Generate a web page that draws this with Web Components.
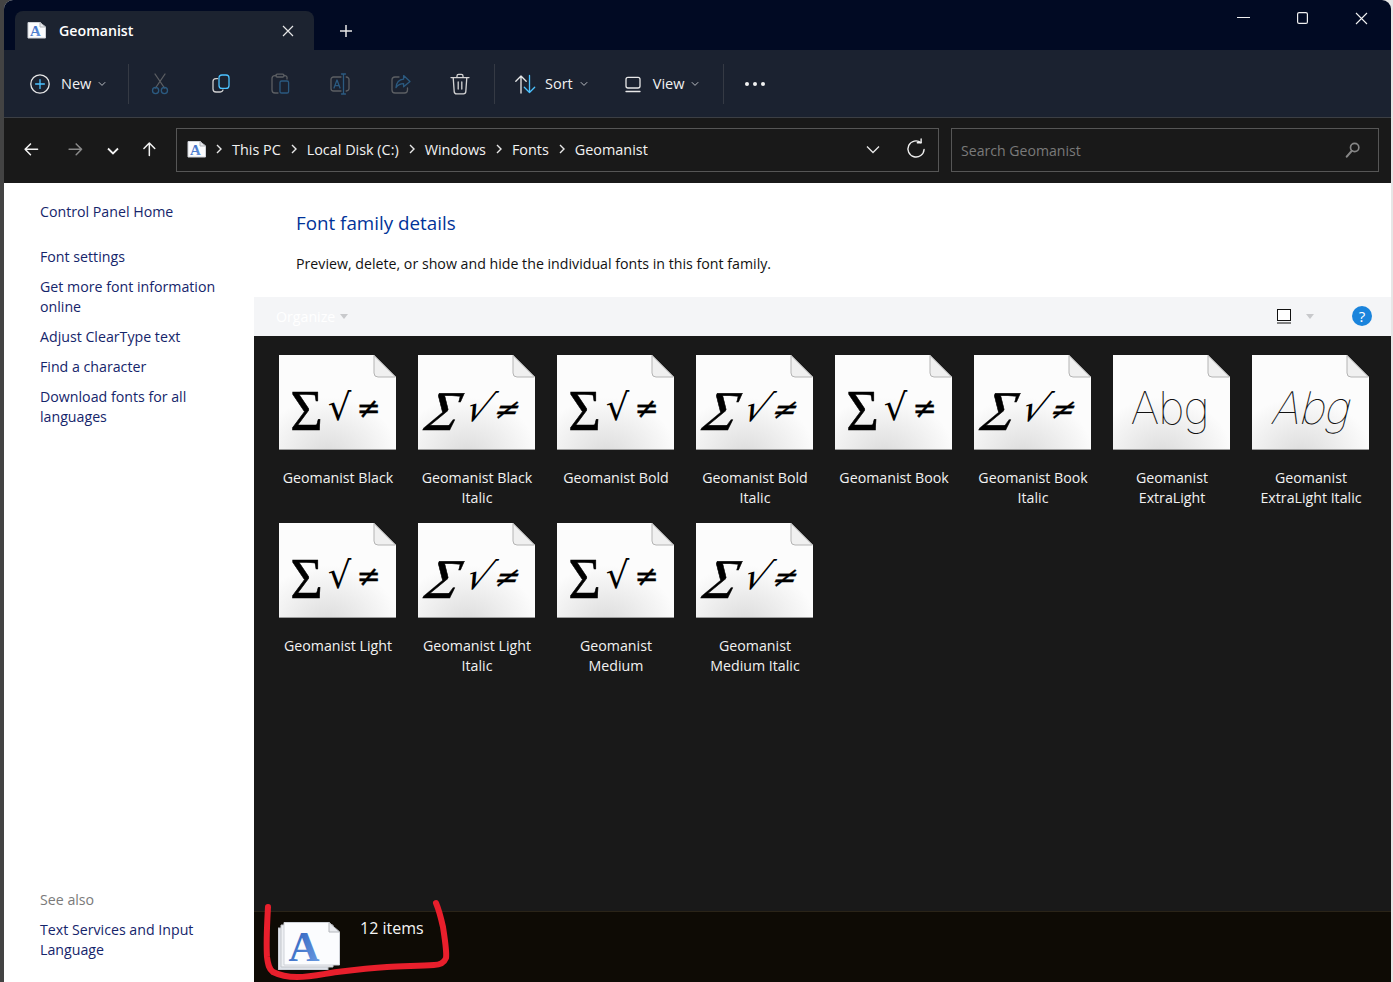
<!DOCTYPE html>
<html>
<head>
<meta charset="utf-8">
<title>Geomanist</title>
<style>
  html, body { margin: 0; height: 100%; }
  body {
    background: linear-gradient(to right, #434343 50%, #e6e6e6 50%);
    overflow: hidden;
    font-family: "Open Sans", "Noto Sans", "Liberation Sans", sans-serif;
  }
</style>
</head>
<body>
<explorer-window>
  <title-bar slot="top" label="Geomanist"></title-bar>
  <command-bar slot="top"></command-bar>
  <nav-bar slot="top"></nav-bar>
  <task-sidebar></task-sidebar>
  <font-panel>
    <font-tile>Geomanist Black</font-tile>
    <font-tile italic>Geomanist Black Italic</font-tile>
    <font-tile>Geomanist Bold</font-tile>
    <font-tile italic>Geomanist Bold Italic</font-tile>
    <font-tile>Geomanist Book</font-tile>
    <font-tile italic>Geomanist Book Italic</font-tile>
    <font-tile kind="abg">Geomanist ExtraLight</font-tile>
    <font-tile kind="abg" italic>Geomanist ExtraLight Italic</font-tile>
    <font-tile>Geomanist Light</font-tile>
    <font-tile italic>Geomanist Light Italic</font-tile>
    <font-tile>Geomanist Medium</font-tile>
    <font-tile italic>Geomanist Medium Italic</font-tile>
  </font-panel>
</explorer-window>

<script>
const BLUE = '#4cc2ff';
const DIM_BLUE = '#2b5a80';
const DIM = '#5c5f63';

const svg = (size, body) =>
  `<svg width="${size}" height="${size}" viewBox="0 0 24 24" fill="none" stroke-linecap="round" stroke-linejoin="round" stroke-width="1.3">${body}</svg>`;

const CHEVRON = `<svg width="8" height="6" viewBox="0 0 8 6" fill="none" stroke="#b9bcc2" stroke-width="1"><path d="M.8 1.2 4 4.4l3.2-3.2"/></svg>`;

const ICONS = {
  add: svg(24, `<circle cx="12" cy="12" r="9.2" stroke="#e6e6e6"/><path d="M12 7.6v8.8M7.6 12h8.8" stroke="${BLUE}"/>`),
  cut: svg(24, `<path d="M7 2l9.5 14M17 2 7.5 16" stroke="${DIM}"/><circle cx="7.6" cy="18.6" r="3.1" stroke="${DIM_BLUE}"/><circle cx="16.4" cy="18.6" r="3.1" stroke="${DIM_BLUE}"/>`),
  copy: svg(24, `<rect x="11" y="3" width="10" height="13.4" rx="3" stroke="${BLUE}"/><path d="M9.6 6.6H8a3 3 0 0 0-3 3V17a3 3 0 0 0 3 3h4a3 3 0 0 0 3-2" stroke="#d0d0d0"/>`),
  paste: svg(24, `<path d="M8 3.6H7a3 3 0 0 0-3 3V18a3 3 0 0 0 3 3h3M16 3.6h1a2.6 2.6 0 0 1 2 1.4V7" stroke="${DIM}"/><rect x="8" y="2.2" width="8" height="2.8" rx="1.2" stroke="${DIM}"/><rect x="12" y="9" width="8.6" height="12" rx="1.6" stroke="${DIM_BLUE}"/>`),
  rename: svg(24, `<path d="M13 5H5.5A2.5 2.5 0 0 0 3 7.5v9A2.5 2.5 0 0 0 5.5 19H13M18.2 5a2.6 2.6 0 0 1 2.8 2.5v9a2.6 2.6 0 0 1-2.8 2.5" stroke="${DIM}"/><path d="M15.5 2v20M13.5 2h4M13.5 22h4" stroke="${DIM_BLUE}"/><path d="M6 16l3-8 3 8M7 13.6h4" stroke="${DIM_BLUE}"/>`),
  share: svg(24, `<path d="M11 5H7a3 3 0 0 0-3 3v10a3 3 0 0 0 3 3h9.5a3 3 0 0 0 3-3v-2" stroke="${DIM}"/><path d="M15.6 3.6 22 9.4l-6.4 5.4v-3.2c-3.4 0-5.6 1-7.6 4 .4-4.800 3-8 7.600-8.400z" stroke="${DIM_BLUE}"/>`),
  trash: svg(24, `<path d="M3 5.600h18M9 5.500V4a1.600 1.600 0 0 1 1.600-1.600h2.800A1.600 1.600 0 0 1 15 4v1.500M5.200 5.600l1 14a2.400 2.400 0 0 0 2.400 2.200h6.800a2.400 2.400 0 0 0 2.400-2.200l1-14" stroke="#d4d4d4"/><path d="M10.200 10v7M13.800 10v7" stroke="#d4d4d4"/>`),
  sort: svg(24, `<path d="M8 21V4M2.800 9.200 8 4l5.200 5.200" stroke="#e8e8e8"/><path d="M16.500 3.500v17M11.300 15.300l5.200 5.200 5.200-5.200" stroke="${BLUE}"/>`),
  view: svg(24, `<rect x="5" y="5.400" width="14" height="10.600" rx="2" stroke="#e8e8e8"/><path d="M5 19.500h14" stroke="#e8e8e8"/>`),
  more: `<svg width="22" height="6" viewBox="0 0 22 6" fill="#f2f2f2"><circle cx="3" cy="3" r="2"/><circle cx="11" cy="3" r="2"/><circle cx="19" cy="3" r="2"/></svg>`,
  back: svg(20, `<path d="M17.500 10h-15M9 3.500 2.500 10 9 16.500" stroke="#f2f2f2" stroke-width="1.800"/>`),
  forward: svg(20, `<path d="M2.500 10h15M11 3.500l6.500 6.500-6.500 6.500" stroke="#8a8a8a" stroke-width="1.800"/>`),
  down: `<svg width="12" height="8" viewBox="0 0 12 8" fill="none" stroke="#f2f2f2" stroke-width="1.800"><path d="M1 1.500 6 6.500l5-5"/></svg>`,
  up: svg(20, `<path d="M10 17.500v-15M3.500 9 10 2.500 16.500 9" stroke="#f2f2f2" stroke-width="1.800"/>`),
  crumb: `<svg width="6" height="10" viewBox="0 0 6 10" fill="none" stroke="#e8e8e8" stroke-width="1.400"><path d="M1 1l4 4-4 4"/></svg>`,
  addrDown: `<svg width="14" height="9" viewBox="0 0 14 9" fill="none" stroke="#e8e8e8" stroke-width="1.300"><path d="M1 1.500l6 6 6-6"/></svg>`,
  refresh: svg(22, `<path d="M20.800 12.500a8.800 8.800 0 1 1-3.400-7.500" stroke="#f0f0f0" stroke-width="1.500"/><path d="M17.600 1v4.200h-4.200" stroke="#f0f0f0" stroke-width="1.500"/>`),
  find: svg(20, `<circle cx="14" cy="9" r="5" stroke="#868686" stroke-width="2"/><path d="M10.500 13 4.500 20" stroke="#868686" stroke-width="2.600"/>`),
};

const docIcon = (w, h, fold, fs, back) => `
  <svg width="${w}" height="${h}" viewBox="0 0 ${w} ${h}" style="display:block">
    <defs>
      <linearGradient id="ink" x1="0" y1="0" x2="1" y2="1">
        <stop offset="0" stop-color="#2458b8"/>
        <stop offset="1" stop-color="#6f9fe4"/>
      </linearGradient>
    </defs>
    ${back ? `<path d="M0 6h${w - 12}v${h - 6}H0z" fill="#dfe3ea" stroke="#b9bdc4"/><path d="M3 3h${w - 10}v${h - 6}H3z" fill="#eef0f4" stroke="#c4c7cc"/>` : ''}
    <path d="M${back ? 6 : 1} 0.500H${w - fold - 1}L${w - 0.5} ${fold}V${h - (back ? 5 : 1)}H${back ? 6 : 1}z" fill="#fbfcfe" stroke="#cfd2d8"/>
    <path d="M${w - fold - 1} 0.500L${w - 0.5} ${fold}H${w - fold - 1}z" fill="#e9ebef" stroke="#b3b6bb"/>
    <text x="${back ? 26 : w / 2 - 1}" y="${back ? h - 9 : h - 3.5}" text-anchor="middle" font-family="'Liberation Serif', serif" font-weight="700" font-size="${fs}" fill="url(#ink)">A</text>
  </svg>`;

class ExplorerWindow extends HTMLElement {
  constructor() {
    super();
    this.attachShadow({ mode: 'open' }).innerHTML = `
      <style>
        :host {
          display: flex;
          flex-direction: column;
          position: relative;
          margin: 0 2px 0 4px;
          height: 982px;
          border-radius: 9px 9px 0 0;
          overflow: hidden;
          background: #fff;
          color: #000;
        }
        .body { flex: 1; display: flex; min-height: 0; }
        .ink { position: absolute; left: -4px; top: 0; pointer-events: none; }
      </style>
      <slot name="top"></slot>
      <div class="body"><slot></slot></div>
      <svg class="ink" width="1393" height="982" viewBox="0 0 1393 982" fill="none">
        <path d="M268 907c-1 18-2 34-1 50 1 8 2 12 6 15 6 3 14 5 24 5 14 0 26-3 40-5 16-2 32-4 50-5 17-1 32-1 47-2 6 0 10-2 12-7 1-6-1-18-3-31-2-9-4-17-7-24"
          stroke="#e81f2c" stroke-width="6" stroke-linecap="round" stroke-linejoin="round"/>
      </svg>
    `;
  }
}

class TitleBar extends HTMLElement {
  constructor() {
    super();
    this.attachShadow({ mode: 'open' });
  }

  connectedCallback() {
    this.shadowRoot.innerHTML = `
      <style>
        :host {
          display: flex;
          height: 50px;
          padding-left: 11px;
          box-sizing: border-box;
          background: #010a23;
          color: #fff;
          align-items: flex-end;
        }
        .tab {
          position: relative;
          width: 299px;
          height: 39px;
          box-sizing: border-box;
          padding: 0 14px 0 12px;
          display: flex;
          align-items: center;
          background: #1c2330;
          border-radius: 8px 8px 0 0;
          font-size: 14.200px;
          font-weight: 600;
        }
        .fav { width: 19px; margin-right: 13px; }
        .name { flex: 1; }
        .close { width: 12px; height: 12px; margin-right: 6px; }
        .plus { width: 14px; height: 14px; margin: 0 0 12px 25px; }
        .controls { margin-left: auto; display: flex; align-self: flex-start; }
        .controls div { width: 59px; height: 36px; display: flex; align-items: center; justify-content: center; }
        svg { display: block; }
      </style>
      <div class="tab">
        <div class="fav">${docIcon(19, 17, 5, 15)}</div>
        <div class="name">${this.getAttribute('label')}</div>
        <svg class="close" viewBox="0 0 12 12" stroke="#e6e6e6" stroke-width="1.200"><path d="M1 1l10 10M11 1 1 11"/></svg>
      </div>
      <svg class="plus" viewBox="0 0 14 14" stroke="#e6e6e6" stroke-width="1.500"><path d="M7 1v12M1 7h12"/></svg>
      <div class="controls">
        <div><svg width="13" height="2" stroke="#f0f0f0"><path d="M0 .5h13"/></svg></div>
        <div><svg width="11" height="12" fill="none" stroke="#f0f0f0" stroke-width="1.200"><rect x=".6" y=".6" width="9.800" height="10.800" rx="1.500"/></svg></div>
        <div><svg width="13" height="13" stroke="#f0f0f0" stroke-width="1.100"><path d="M1 1l11 11M12 1 1 12"/></svg></div>
      </div>
    `;
  }
}

class CommandBar extends HTMLElement {
  constructor() {
    super();
    const tool = (name) => `<span class="tool">${ICONS[name]}</span>`;
    this.attachShadow({ mode: 'open' }).innerHTML = `
      <style>
        :host {
          display: flex;
          align-items: center;
          height: 68px;
          box-sizing: border-box;
          border-bottom: 1px solid #3c3f44;
          padding: 0 0 0 24px;
          background: #1b2230;
          color: #f2f2f2;
          font-size: 14.500px;
        }
        .btn { display: flex; align-items: center; }
        .btn span.label { margin: 0 7px 0 8px; }
        .sep { width: 1px; height: 40px; background: #353a44; }
        .tool { width: 60px; display: flex; justify-content: center; }
        svg { display: block; }
      </style>
      <div class="btn" style="width:100px">${ICONS.add}<span class="label" style="margin-left:9px">New</span>${CHEVRON}</div>
      <div class="sep"></div>
      <div class="btn" style="margin-left:1px">${tool('cut')}${tool('copy')}${tool('paste')}${tool('rename')}${tool('share')}${tool('trash')}</div>
      <div class="sep" style="margin-left:4px"></div>
      <div class="btn" style="margin-left:18px">${ICONS.sort}<span class="label">Sort</span>${CHEVRON}</div>
      <div class="btn" style="margin-left:33px">${ICONS.view}<span class="label">View</span>${CHEVRON}</div>
      <div class="sep" style="margin-left:24px"></div>
      <div class="btn" style="margin-left:20px">${ICONS.more}</div>
    `;
  }
}

class NavBar extends HTMLElement {
  constructor() {
    super();
    const crumbs = ['This PC', 'Local Disk (C:)', 'Windows', 'Fonts', 'Geomanist']
      .map((c) => `<span class="sep">${ICONS.crumb}</span><span>${c}</span>`).join('');
    this.attachShadow({ mode: 'open' }).innerHTML = `
      <style>
        :host {
          display: flex;
          align-items: flex-start;
          height: 65px;
          box-sizing: border-box;
          padding: 10px 12px 0 19px;
          background: #191919;
          color: #f2f2f2;
          font-size: 14.400px;
        }
        .arrows { display: flex; align-items: center; height: 44px; box-sizing: border-box; padding-top: 2px; }
        .box {
          height: 44px;
          box-sizing: border-box;
          border: 1px solid #565656;
          display: flex;
          align-items: center;
        }
        .addr { width: 763px; margin-left: 15px; padding: 0 11px 2px 10px; }
        .sep { width: 26px; display: flex; justify-content: center; }
        .addr .sep:first-of-type { width: 25px; margin-left: -1px; }
        .doc { width: 19px; }
        .end { margin-left: auto; display: flex; align-items: center; gap: 25px; }
        .search { width: 428px; margin-left: 12px; padding: 0 15px 0 9px; color: #7a7a7a; justify-content: space-between; font-size: 14.100px; }
        svg { display: block; }
      </style>
      <div class="arrows">
        ${ICONS.back}
        <span style="margin-left:24px">${ICONS.forward}</span>
        <span style="margin-left:20px">${ICONS.down}</span>
        <span style="margin-left:22px">${ICONS.up}</span>
      </div>
      <div class="box addr">
        <span class="doc">${docIcon(19, 17, 5, 15)}</span>
        ${crumbs}
        <span class="end">${ICONS.addrDown}${ICONS.refresh}</span>
      </div>
      <div class="box search"><span>Search Geomanist</span>${ICONS.find}</div>
    `;
  }
}

class TaskSidebar extends HTMLElement {
  constructor() {
    super();
    this.attachShadow({ mode: 'open' }).innerHTML = `
      <style>
        :host {
          display: flex;
          flex-direction: column;
          justify-content: space-between;
          width: 250px;
          flex: none;
          box-sizing: border-box;
          padding: 19px 24px 22px 36px;
          background: #fff;
          color: #15256b;
          font-size: 14.200px;
          line-height: 20px;
        }
        ul { list-style: none; margin: 0; padding: 0; display: flex; flex-direction: column; gap: 10px; }
        .home { margin-bottom: 15px; }
        .muted { color: #7a7a7a; }
      </style>
      <ul>
        <li class="home">Control Panel Home</li>
        <li>Font settings</li>
        <li>Get more font information online</li>
        <li>Adjust ClearType text</li>
        <li>Find a character</li>
        <li>Download fonts for all languages</li>
      </ul>
      <ul>
        <li class="muted">See also</li>
        <li>Text Services and Input Language</li>
      </ul>
    `;
  }
}

class FontPanel extends HTMLElement {
  constructor() {
    super();
    this.attachShadow({ mode: 'open' }).innerHTML = `
      <style>
        :host {
          flex: 1;
          min-width: 0;
          display: flex;
          flex-direction: column;
          font-size: 14.200px;
        }
        header { height: 114px; box-sizing: border-box; padding: 26px 0 0 42px; flex: none; }
        h1 { margin: 0; font-size: 18.800px; line-height: 28px; font-weight: 400; color: #003399; }
        p { margin: 17px 0 0; line-height: 20px; color: #111; }
        .bar {
          height: 39px;
          flex: none;
          box-sizing: border-box;
          display: flex;
          align-items: center;
          padding: 0 19px 0 22px;
          background: #f4f5f7;
          color: #fff;
        }
        .caret { width: 0; height: 0; border: 4.500px solid transparent; border-top: 5px solid #c8c9cc; border-bottom: 0; margin-left: 5px; }
        .grid {
          flex: 1;
          display: flex;
          flex-wrap: wrap;
          align-content: flex-start;
          padding: 19px 0 0 15px;
          background: #191919;
        }
        .details {
          height: 71px;
          flex: none;
          box-sizing: border-box;
          display: flex;
          border-top: 1px solid #2a2418;
          padding: 10px 0 0 24px;
          background: #0e0b05;
          color: #f5f5f5;
          font-size: 16px;
        }
        .count { margin: -6px 0 0 20px; line-height: 24px; }
        svg { display: block; }
      </style>
      <header>
        <h1>Font family details</h1>
        <p>Preview, delete, or show and hide the individual fonts in this font family.</p>
      </header>
      <div class="bar">
        <span>Organize</span><span class="caret"></span>
        <svg style="margin:-2px 0 0 auto" width="16" height="16" viewBox="0 0 16 16" fill="none" stroke="#111"><rect x="1.500" y="1.500" width="13" height="11" fill="#fff"/><path d="M1 15h14"/></svg>
        <span class="caret" style="margin:0 0 0 14px"></span>
        <svg style="margin:-2px 0 0 38px" width="20" height="20" viewBox="0 0 20 20"><circle cx="10" cy="10" r="10" fill="#1a84dc"/><text x="10" y="15.500" text-anchor="middle" font-family="'Open Sans', sans-serif" font-size="15" fill="#fff">?</text></svg>
      </div>
      <div class="grid"><slot></slot></div>
      <div class="details">
        ${docIcon(62, 48, 10, 43, true)}
        <div class="count">12 items</div>
      </div>
    `;
  }
}

class FontTile extends HTMLElement {
  constructor() {
    super();
    this.attachShadow({ mode: 'open' });
  }

  connectedCallback() {
    const sample = this.getAttribute('kind') === 'abg'
      ? `<span class="abg">Abg</span>`
      : `<span class="sig">Σ</span><span class="root">√</span><span class="ne">≠</span>`;
    this.shadowRoot.innerHTML = `
      <style>
        :host { display: block; width: 139px; height: 168px; color: #f2f2f2; font-size: 14.200px; }
        .icon {
          position: relative;
          width: 117px;
          height: 95px;
          margin-left: 10px;
          display: flex;
          align-items: center;
          justify-content: center;
          padding-top: 16px;
          box-sizing: border-box;
          color: #000;
          font-family: "Liberation Serif", serif;
          line-height: 1;
        }
        .icon svg { position: absolute; left: 0; top: 0; }
        .sample { position: relative; display: flex; align-items: center; gap: 5px; margin-left: -4px; }
        :host([italic]) .sample { transform: skewX(-24deg); }
        :host([italic][kind]) .sample { transform: skewX(-14deg); margin-left: 4px; }
        .sig { font-size: 56px; -webkit-text-stroke: .5px #000; }
        .root { font-family: "DejaVu Sans", sans-serif; font-size: 37px; position: relative; top: -3px; }
        .ne { font-family: "DejaVu Sans", sans-serif; font-size: 29px; position: relative; top: -2px; -webkit-text-stroke: .3px #000; }
        .abg { font-family: Inter, Roboto, sans-serif; font-weight: 100; font-size: 45px; color: #111; letter-spacing: -1px; position: relative; top: -3px; }
        .label { width: 118px; margin: 18px 0 0 10px; text-align: center; line-height: 20px; }
      </style>
      <div class="icon">
        <svg width="117" height="95" viewBox="0 0 117 95">
          <defs>
            <radialGradient id="sheen" cx="42%" cy="105%" r="60%">
              <stop offset="0" stop-color="#dcdcdc"/>
              <stop offset="1" stop-color="#fcfcfc"/>
            </radialGradient>
          </defs>
          <path d="M0 0H95L117 22V95H0z" fill="url(#sheen)"/>
          <path d="M0 94.500H117" stroke="#9c9c9c"/>
          <path d="M95 0.500 116.500 22H99a4 4 0 0 1-4-4z" fill="#f0f0f0" stroke="#b4b4b4"/>
        </svg>
        <div class="sample">${sample}</div>
      </div>
      <div class="label"><slot></slot></div>
    `;
  }
}

customElements.define('explorer-window', ExplorerWindow);
customElements.define('title-bar', TitleBar);
customElements.define('command-bar', CommandBar);
customElements.define('nav-bar', NavBar);
customElements.define('task-sidebar', TaskSidebar);
customElements.define('font-panel', FontPanel);
customElements.define('font-tile', FontTile);
</script>
</body>
</html>
